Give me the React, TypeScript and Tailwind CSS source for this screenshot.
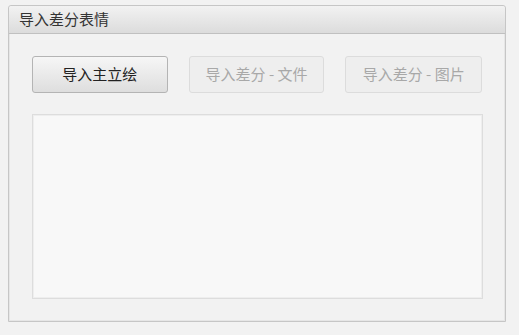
import React from "react";

export default function App() {
  const font = { fontFamily: '"Noto Sans CJK SC", "Noto Sans", sans-serif' };
  return (
    <div className="w-[519px] h-[335px] bg-[#f2f2f2] pt-[5px] pl-[8px]" style={font}>
      <div className="w-[498px] h-[317px] border border-[#c6c6c6] rounded-t-[3px] bg-[#f2f2f2] flex flex-col">
        <div className="h-[28px] shrink-0 border-b border-[#c0c0c0] bg-gradient-to-b from-[#f2f2f2] to-[#dcdcdc] rounded-t-[3px] flex items-center pl-[10px] text-[15px] text-[#333]">
          导入差分表情
        </div>
        <div className="flex-1 border border-[#e6e6e6] border-t-0 px-[22px] pt-[22px]">
          <div className="flex gap-[21px]">
            <button className="w-[136px] h-[37px] rounded-[3px] border border-[#b4b4b4] bg-gradient-to-b from-[#f6f6f6] to-[#dedede] text-[15px] text-[#222]">
              导入主立绘
            </button>
            <button className="w-[136px] h-[37px] rounded-[3px] border border-[#dcdcdc] bg-[#eeeeee] text-[15px] text-[#a8a8a8]">
              导入差分 - 文件
            </button>
            <button className="w-[137px] h-[37px] rounded-[3px] border border-[#dcdcdc] bg-[#eeeeee] text-[15px] text-[#a8a8a8]">
              导入差分 - 图片
            </button>
          </div>
          <div className="mt-[21px] w-[451px] h-[185px] border border-[#dddddd] bg-[#f8f8f8] shadow-[inset_0_0_0_1px_#eeeeee]" />
        </div>
      </div>
    </div>
  );
}
